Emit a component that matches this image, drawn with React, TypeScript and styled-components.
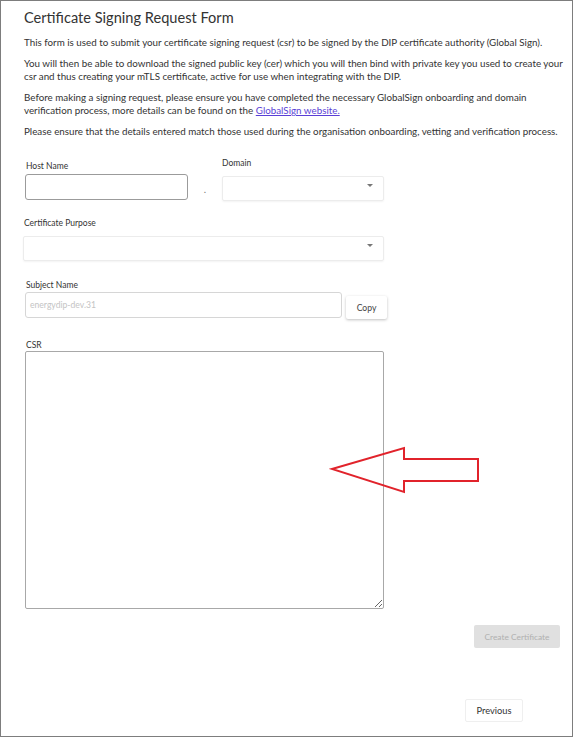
import React from "react";
import styled, { createGlobalStyle } from "styled-components";

const Global = createGlobalStyle`
  html, body { margin: 0; padding: 0; background: #fff; }
  body { font-family: Lato, "Noto Sans", sans-serif; color: #333; }
  * { box-sizing: border-box; }
`;

const Frame = styled.div`
  position: relative;
  width: 573px;
  height: 737px;
  border: 1px solid #7d7d7d;
  padding: 7px 12px 0 23px;
  display: flex;
  flex-direction: column;
`;

const Title = styled.h1`
  margin: 0 0 8px;
  font-size: 14.6px;
  font-weight: 400;
  color: #333;
  line-height: 20px;
`;

const Para = styled.p`
  margin: 0 -6px 7px 0;
  font-size: 9.8px;
  line-height: 13.5px;
  color: #333;
`;

const Link = styled.a`
  color: #5a3fd6;
  text-decoration: underline;
`;

const Form = styled.div`
  display: flex;
  flex-direction: column;
  width: 365px;
  margin-top: 15.5px;
`;

const Row = styled.div`
  display: flex;
  align-items: flex-start;
`;

const Field = styled.div<{ $w?: number; $ml?: number; $mt?: number }>`
  display: flex;
  flex-direction: column;
  width: ${(p) => (p.$w ? `${p.$w}px` : "auto")};
  margin-left: ${(p) => p.$ml ?? 0}px;
  margin-top: ${(p) => p.$mt ?? 0}px;
`;

const Label = styled.label<{ $mb?: number; $ml?: number }>`
  font-size: 8.5px;
  color: #333;
  line-height: 11px;
  margin-bottom: ${(p) => p.$mb ?? 4}px;
  margin-left: ${(p) => p.$ml ?? 0}px;
`;

const TextInput = styled.div`
  height: 26px;
  border: 1px solid #9b9b9b;
  border-radius: 3px;
  background: #fff;
`;

const SubjectInput = styled.div`
  flex: 1;
  height: 26px;
  border: 1px solid #d6d6d6;
  border-radius: 3px;
  padding: 0 4px;
  display: flex;
  align-items: center;
  font-size: 8.6px;
  color: #c4c4c4;
`;

const Select = styled.div`
  height: 25px;
  border: 1px solid #ececec;
  border-radius: 2px;
  box-shadow: 0 1px 2px rgba(0, 0, 0, 0.05);
  display: flex;
  align-items: center;
  justify-content: flex-end;
  padding-right: 10px;
`;

const Caret = styled.span`
  width: 0;
  height: 0;
  border-left: 3px solid transparent;
  border-right: 3px solid transparent;
  border-top: 3px solid #777;
  margin-top: -6px;
`;

const Dot = styled.span`
  width: 34px;
  text-align: center;
  font-size: 10px;
  color: #777;
  margin-top: 22px;
`;

const SubjectRow = styled.div`
  display: flex;
  align-items: flex-start;
  gap: 4px;
  width: 362px;
`;

const CopyButton = styled.button`
  margin-top: 4px;
  height: 23px;
  width: 41px;
  border: none;
  border-radius: 2px;
  background: #fff;
  box-shadow: 0 1px 3px rgba(0, 0, 0, 0.25);
  font-family: inherit;
  font-size: 8.6px;
  color: #444;
  padding: 0;
`;

const TextArea = styled.textarea`
  width: 359px;
  height: 258px;
  border: 1px solid #a8a8a8;
  border-radius: 2px;
  resize: both;
  display: block;
  font-family: inherit;
`;

const Actions = styled.div`
  display: flex;
  flex-direction: column;
  align-items: flex-end;
`;

const CreateButton = styled.button`
  margin-top: 16px;
  width: 86px;
  height: 23px;
  border: none;
  border-radius: 2px;
  background: #e0e0e0;
  color: #b0b0b0;
  font-family: inherit;
  font-size: 8.4px;
  padding: 0;
`;

const PrevButton = styled.button`
  margin-top: 51px;
  margin-right: 37px;
  width: 58px;
  height: 23px;
  border: 1px solid #efefef;
  border-radius: 2px;
  background: #fff;
  color: #333;
  font-family: inherit;
  font-size: 9.3px;
  padding: 0;
`;

const Arrow = styled.svg`
  position: absolute;
  left: 328px;
  top: 444px;
`;

export default function App() {
  return (
    <>
      <Global />
      <Frame>
        <Title>Certificate Signing Request Form</Title>
        <Para>
          This form is used to submit your certificate signing request (csr) to be signed by the DIP certificate authority (Global Sign).
        </Para>
        <Para>
          You will then be able to download the signed public key (cer) which you will then bind with private key you used to create your csr and thus creating your mTLS certificate, active for use when integrating with the DIP.
        </Para>
        <Para>
          Before making a signing request, please ensure you have completed the necessary GlobalSign onboarding and domain verification process, more details can be found on the <Link href="#">GlobalSign website.</Link>
        </Para>
        <Para>
          Please ensure that the details entered match those used during the organisation onboarding, vetting and verification process.
        </Para>

        <Form>
          <Row>
            <Field $w={163} $ml={1}>
              <Label $mb={2.5} $ml={1}>Host Name</Label>
              <TextInput />
            </Field>
            <Dot>.</Dot>
            <Field $w={162} $mt={-3}>
              <Label $mb={7.5}>Domain</Label>
              <Select>
                <Caret />
              </Select>
            </Field>
          </Row>

          <Field $w={361} $ml={-1} $mt={16.5}>
            <Label $mb={7.5} $ml={1}>Certificate Purpose</Label>
            <Select>
              <Caret />
            </Select>
          </Field>

          <Field $ml={1} $mt={18.5}>
            <Label $mb={1.5} $ml={1}>Subject Name</Label>
            <SubjectRow>
              <SubjectInput>energydip-dev.31</SubjectInput>
              <CopyButton>Copy</CopyButton>
            </SubjectRow>
          </Field>

          <Field $ml={1} $mt={20.5}>
            <Label $mb={0.5} $ml={1}>CSR</Label>
            <TextArea />
          </Field>
        </Form>

        <Actions>
          <CreateButton>Create Certificate</CreateButton>
          <PrevButton>Previous</PrevButton>
        </Actions>

        <Arrow width="154" height="52" viewBox="328 444 154 52">
          <polygon
            points="331,468 403,447 403,458 477,458 477,480 403,480 403,491"
            fill="none"
            stroke="#e1232b"
            strokeWidth="2"
            strokeLinejoin="miter"
          />
        </Arrow>
      </Frame>
    </>
  );
}
